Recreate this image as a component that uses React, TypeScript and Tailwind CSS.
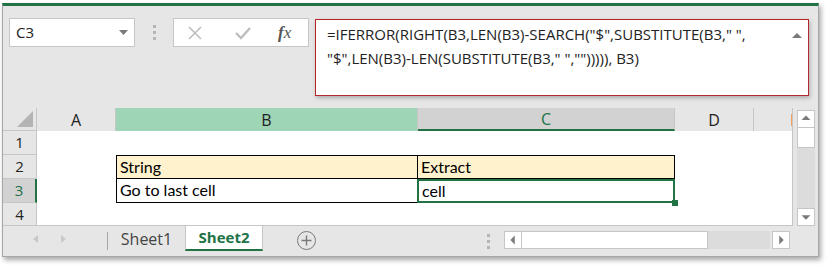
import type { ReactNode } from 'react'

const ui = { fontFamily: '"Open Sans", "Noto Sans", sans-serif' }
const cellFont = { fontFamily: 'Lato, "Noto Sans", sans-serif' }

const cols = [
  { label: 'A', w: 'w-[79px]', cls: 'bg-[#e6e6e6] text-[#222]' },
  { label: 'B', w: 'w-[302px]', cls: 'bg-[#9fd5b7] text-[#222]' },
  { label: 'C', w: 'w-[257px]', cls: 'bg-[#d2d2d2] text-[#217346] border-b-2 border-b-[#217346]' },
  { label: 'D', w: 'w-[79px]', cls: 'bg-[#e6e6e6] text-[#222]' },
]

function RowHead({ n, active }: { n: number; active?: boolean }) {
  return (
    <div
      className={`w-[34px] h-full flex items-center justify-center text-[15px] border-b border-[#c6c6c6] ${
        active
          ? 'bg-[#d2d2d2] text-[#217346] border-r-2 border-r-[#217346]'
          : 'bg-[#e6e6e6] text-[#222] border-r border-r-[#c6c6c6]'
      }`}
      style={ui}
    >
      {n}
    </div>
  )
}

function Cell({ w, children, cls = '' }: { w: string; children?: ReactNode; cls?: string }) {
  return (
    <div className={`${w} h-full flex items-center pl-[3px] text-[16px] text-black ${cls}`} style={cellFont}>
      {children}
    </div>
  )
}

function ScrollBtn({ dir }: { dir: 'up' | 'down' | 'left' | 'right' }) {
  const pts = {
    up: '4,10 9,5 14,10',
    down: '4,7 9,12 14,7',
    left: '11,4 6,9 11,14',
    right: '7,4 12,9 7,14',
  }[dir]
  return (
    <div className="w-[18px] h-[18px] bg-white border border-[#c6c6c6] flex items-center justify-center">
      <svg width="18" height="18" viewBox="0 0 18 18">
        <polygon points={pts} fill="#7a7a7a" />
      </svg>
    </div>
  )
}

function Dots() {
  return (
    <div className="flex flex-col gap-[3px]">
      <span className="block w-[3px] h-[3px] bg-[#b5b5b5]" />
      <span className="block w-[3px] h-[3px] bg-[#b5b5b5]" />
      <span className="block w-[3px] h-[3px] bg-[#b5b5b5]" />
    </div>
  )
}

export default function App() {
  return (
    <div className="w-[827px] h-[267px] bg-white pt-[3px] pl-[2px]">
      <div className="w-[817px] h-[254px] bg-[#e6e6e6] border-x border-b border-[#a6a6a6] border-t-[3px] border-t-[#217346] shadow-[2px_3px_5px_rgba(0,0,0,0.35)] flex flex-col">
        {/* Formula bar */}
        <div className="h-[102px] flex items-start pt-[12px] pl-[6px]">
          <div className="w-[126px] h-[29px] bg-white border border-[#c6c6c6] flex items-center justify-between pl-[6px] pr-[6px]">
            <span className="text-[15px] text-[#222]" style={ui}>C3</span>
            <svg width="9" height="6" viewBox="0 0 9 6">
              <polygon points="0,0 9,0 4.5,5" fill="#7a7a7a" />
            </svg>
          </div>
          <div className="w-[38px] h-[29px] flex items-center justify-center">
            <Dots />
          </div>
          <div className="w-[136px] h-[29px] bg-white border border-[#c6c6c6] flex items-center">
            <svg className="ml-[13px]" width="16" height="16" viewBox="0 0 16 16">
              <path d="M2 2 L14 14 M14 2 L2 14" stroke="#bdbdbd" strokeWidth="1.6" fill="none" />
            </svg>
            <svg className="ml-[31px]" width="18" height="16" viewBox="0 0 18 16">
              <path d="M2 8 L7 13 L16 3" stroke="#bdbdbd" strokeWidth="2.4" fill="none" />
            </svg>
            <span
              className="ml-[26px] text-[17px] italic text-[#555] leading-none"
              style={{ fontFamily: '"Liberation Serif", "DejaVu Serif", serif' }}
            >
              <span className="font-bold">f</span>x
            </span>
          </div>
          <div className="ml-[6px] mt-[1px] w-[494px] h-[77px] bg-white border border-[#b3262a] shadow-[1px_2px_4px_rgba(0,0,0,0.25)] flex justify-between pl-[11px] pr-[4px] pt-[2px]">
            <div className="text-[15px] leading-[24px] text-[#222]" style={ui}>
              <div>=IFERROR(RIGHT(B3,LEN(B3)-SEARCH("$",SUBSTITUTE(B3," ",</div>
              <div>"$",LEN(B3)-LEN(SUBSTITUTE(B3," ",""))))), B3)</div>
            </div>
            <svg className="mt-[8px]" width="14" height="10" viewBox="0 0 14 10">
              <polygon points="2,8 7,3 12,8" fill="#7a7a7a" />
            </svg>
          </div>
        </div>

        {/* Grid + vertical scrollbar */}
        <div className="h-[118px] flex">
          <div className="w-[790px] flex flex-col border-r border-b border-[#c6c6c6] bg-white">
            <div className="h-[23px] flex bg-[#e6e6e6]">
              <div className="w-[34px] h-full border-r border-b border-[#c6c6c6] flex items-end justify-end pr-[3px] pb-[3px]">
                <svg width="16" height="16" viewBox="0 0 16 16">
                  <polygon points="16,0 16,16 0,16" fill="#b4b4b4" />
                </svg>
              </div>
              {cols.map((c) => (
                <div
                  key={c.label}
                  className={`${c.w} h-full flex items-center justify-center text-[16px] border-r border-[#c6c6c6] ${c.cls}`}
                  style={ui}
                >
                  {c.label}
                </div>
              ))}
              <div className="flex-1 h-full flex items-center pl-[37px]">
                <span className="block w-px h-[12px] bg-[#f0a060]" />
              </div>
            </div>
            <div className="h-[24px] flex">
              <RowHead n={1} />
            </div>
            <div className="h-[24px] flex">
              <RowHead n={2} />
              <div className="w-[79px]" />
              <Cell w="w-[302px]" cls="bg-[#fff2cc] border border-black">String</Cell>
              <Cell w="w-[257px]" cls="bg-[#fff2cc] border-y border-r border-black">Extract</Cell>
            </div>
            <div className="h-[24px] flex">
              <RowHead n={3} active />
              <div className="w-[79px]" />
              <Cell w="w-[302px]" cls="border-x border-b border-black">Go to last cell</Cell>
              <div className="relative -ml-px w-[258px] h-full">
                <Cell w="w-full" cls="border-2 border-[#217346]">cell</Cell>
                <span className="absolute right-[-3px] bottom-[-3px] w-[6px] h-[6px] bg-[#217346]" />
              </div>
            </div>
            <div className="flex-1 flex">
              <div
                className="w-[34px] h-full flex items-center justify-center text-[15px] text-[#222] bg-[#e6e6e6] border-r border-[#c6c6c6]"
                style={ui}
              >
                4
              </div>
            </div>
          </div>
          <div className="ml-[4px] mt-[2px] w-[18px] flex flex-col bg-[#dcdcdc]">
            <ScrollBtn dir="up" />
            <div className="h-[20px] bg-white border-x border-b border-[#c6c6c6]" />
            <div className="flex-1" />
            <ScrollBtn dir="down" />
          </div>
        </div>

        {/* Sheet tabs */}
        <div className="flex-1 flex items-start">
          <div className="w-[104px] h-[25px] flex items-center">
            <svg className="ml-[27px]" width="10" height="12" viewBox="0 0 10 12">
              <polygon points="8,2 3,6 8,10" fill="#c8c8c8" />
            </svg>
            <svg className="ml-[19px]" width="10" height="12" viewBox="0 0 10 12">
              <polygon points="2,2 7,6 2,10" fill="#c8c8c8" />
            </svg>
          </div>
          <div className="mt-[6px] w-px h-[18px] bg-[#a6a6a6]" />
          <div
            className="w-[77px] h-[25px] flex items-center justify-center text-[16px] text-[#444]"
            style={ui}
          >
            Sheet1
          </div>
          <div
            className="w-[78px] h-[25px] bg-white border-x border-[#c6c6c6] border-b-2 border-b-[#217346] flex items-center justify-center text-[15px] font-bold text-[#217346]"
            style={ui}
          >
            Sheet2
          </div>
          <div className="ml-[34px] mt-[5px] w-[19px] h-[19px] rounded-full border border-[#7a7a7a] flex items-center justify-center">
            <svg width="11" height="11" viewBox="0 0 11 11">
              <path d="M5.5 0.5 V10.5 M0.5 5.5 H10.5" stroke="#7a7a7a" strokeWidth="1.4" />
            </svg>
          </div>
          <div className="ml-[171px] mt-[8px]">
            <Dots />
          </div>
          <div className="ml-[14px] mt-[5px] flex items-center h-[18px]">
            <ScrollBtn dir="left" />
            <div className="w-[186px] h-[18px] bg-white border-y border-r border-[#c6c6c6]" />
            <div className="w-[62px] h-[18px] bg-[#dcdcdc]" />
            <div className="ml-[2px]">
              <ScrollBtn dir="right" />
            </div>
          </div>
        </div>
      </div>
    </div>
  )
}
